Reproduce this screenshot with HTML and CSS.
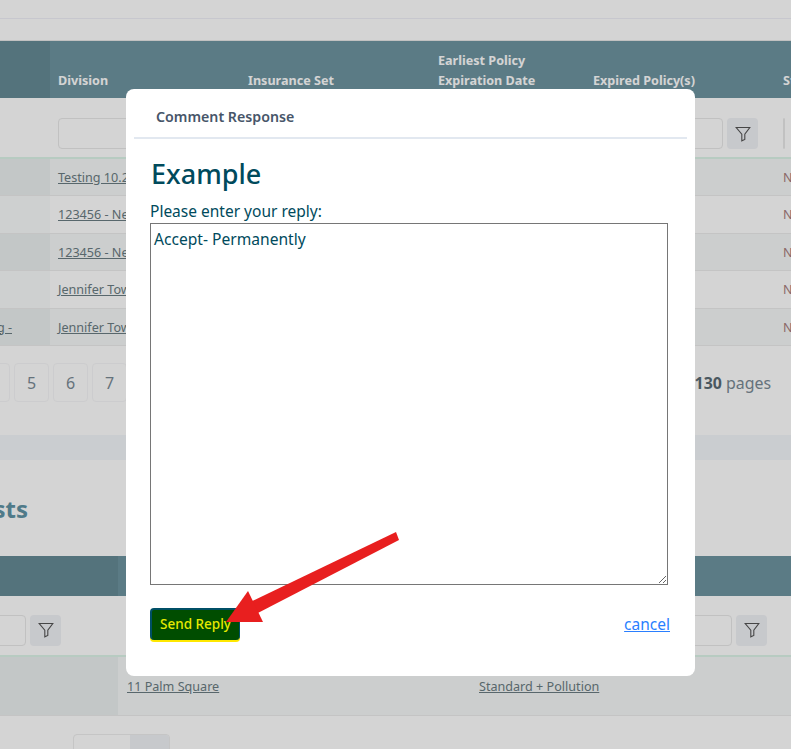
FILE: index.html
```html
<!DOCTYPE html>
<html lang="en">
<head>
<meta charset="utf-8">
<title>Comment Response</title>
<link rel="stylesheet" href="styles.css">
</head>
<body>
<div class="page">
  <div class="topbar"></div>
  <div class="subbar"></div>

  <section class="grid grid-one">
    <div class="row head">
      <div class="cell fixed"></div>
      <div class="cell">Division</div>
      <div class="cell">Insurance Set</div>
      <div class="cell">Earliest Policy<br>Expiration Date</div>
      <div class="cell">Expired Policy(s)</div>
      <div class="cell">Status</div>
    </div>
    <div class="row filters">
      <div class="cell"></div>
      <div class="cell"><span class="input"></span></div>
      <div class="cell"><span class="input"></span></div>
      <div class="cell"><span class="input"></span></div>
      <div class="cell filter-end">
        <span class="input"></span>
        <button class="funnel" type="button" aria-label="Filter"><svg viewBox="0 0 16 16" class="funnel-icon"><path d="M1.2 1.5h13.6L9.8 8.2v5.2l-3 1.4V8.2z"/></svg></button>
      </div>
      <div class="cell"><span class="input"></span></div>
    </div>
    <div class="row body alt">
      <div class="cell fixed"></div>
      <div class="cell"><a href="#">Testing 10.2</a></div>
      <div class="cell"></div><div class="cell"></div><div class="cell"></div>
      <div class="cell status">No</div>
    </div>
    <div class="row body">
      <div class="cell fixed"></div>
      <div class="cell"><a href="#">123456 - New</a></div>
      <div class="cell"></div><div class="cell"></div><div class="cell"></div>
      <div class="cell status">No</div>
    </div>
    <div class="row body alt">
      <div class="cell fixed"></div>
      <div class="cell"><a href="#">123456 - New</a></div>
      <div class="cell"></div><div class="cell"></div><div class="cell"></div>
      <div class="cell status">No</div>
    </div>
    <div class="row body">
      <div class="cell fixed"></div>
      <div class="cell"><a href="#">Jennifer Towers</a></div>
      <div class="cell"></div><div class="cell"></div><div class="cell"></div>
      <div class="cell status">No</div>
    </div>
    <div class="row body alt">
      <div class="cell fixed clipped"><a href="#">Testing -</a></div>
      <div class="cell"><a href="#">Jennifer Towers</a></div>
      <div class="cell"></div><div class="cell"></div><div class="cell"></div>
      <div class="cell status">No</div>
    </div>
  </section>

  <div class="pager">
    <div class="pages">
      <span class="page-box">4</span>
      <span class="page-box">5</span>
      <span class="page-box">6</span>
      <span class="page-box">7</span>
    </div>
    <div class="page-count"><b>130</b> pages</div>
  </div>

  <div class="band"></div>

  <div class="section-title"><h2>Requests</h2></div>

  <section class="grid grid-two">
    <div class="row head two">
      <div class="cell fixed"></div>
      <div class="cell"></div>
      <div class="cell"></div>
    </div>
    <div class="row filters two">
      <div class="cell filter-start">
        <span class="input"></span>
        <button class="funnel" type="button" aria-label="Filter"><svg viewBox="0 0 16 16" class="funnel-icon"><path d="M1.2 1.5h13.6L9.8 8.2v5.2l-3 1.4V8.2z"/></svg></button>
      </div>
      <div class="cell"></div>
      <div class="cell filter-last">
        <span class="input"></span>
        <button class="funnel" type="button" aria-label="Filter"><svg viewBox="0 0 16 16" class="funnel-icon"><path d="M1.2 1.5h13.6L9.8 8.2v5.2l-3 1.4V8.2z"/></svg></button>
      </div>
    </div>
    <div class="row body alt two">
      <div class="cell fixed"></div>
      <div class="cell"><a href="#">11 Palm Square</a></div>
      <div class="cell"><a href="#">Standard + Pollution</a></div>
    </div>
  </section>

  <div class="footer">
    <span class="per-page">items in</span>
    <span class="select"><span class="select-value">5</span><span class="select-arrow"></span></span>
    <span class="item-count">1 items in 1</span>
  </div>

  <div class="overlay">
    <div class="modal">
      <div class="modal-head">Comment Response</div>
      <div class="modal-body">
        <h1>Example</h1>
        <label class="reply-label" for="reply">Please enter your reply:</label>
        <textarea id="reply" class="reply">Accept- Permanently</textarea>
        <div class="actions">
          <button class="send" type="button">Send Reply</button>
          <a class="cancel" href="#">cancel</a>
        </div>
      </div>
    </div>
    <svg class="arrow" viewBox="0 0 791 749" aria-hidden="true">
      <polygon points="396,532 399,540 252,616 246,604"/>
      <polygon points="248,591 263,622 226,622"/>
    </svg>
  </div>
</div>
</body>
</html>
```

FILE: styles.css
```css
* { box-sizing: border-box; }
html, body { margin: 0; padding: 0; }
body {
  font-family: "Noto Sans", "Open Sans", sans-serif;
  background: #fff;
}
.page {
  position: relative;
  width: 791px;
  height: 749px;
  overflow: hidden;
  background: #fff;
  color: #4a5a60;
}
.topbar { height: 19px; border-bottom: 1px solid #f0f0f8; }
.subbar { height: 22px; border-bottom: 1px solid #e8e8e8; }

.row { display: grid; }
.grid-one .row { grid-template-columns: 50px 190px 190px 155px 190px 1fr; }
.grid-two .row { grid-template-columns: 118px 352px 1fr; }
.cell {
  padding: 0 8px;
  min-width: 0;
  white-space: nowrap;
  overflow: hidden;
}

.head {
  height: 57px;
  background: #6e95a1;
  color: #fff;
  font-size: 12.6px;
  font-weight: 700;
  line-height: 20px;
}
.head .cell { display: flex; align-items: flex-end; padding-bottom: 7px; }
.head .fixed { background: #668b96; }
.head.two { height: 40px; }

.filters {
  height: 61px;
  border-bottom: 2px solid #dcf4e8;
}
.filters .cell { display: flex; align-items: flex-start; padding-top: 20px; gap: 4px; }
.filters.two .cell { padding-top: 19px; }
.input {
  display: block;
  flex: 1;
  height: 31px;
  border: 1px solid #e8e8e8;
  border-radius: 4px;
  background: #fff;
}
.funnel {
  flex: none;
  width: 31px;
  height: 31px;
  padding: 0;
  border: 0;
  border-radius: 4px;
  background: #f0f2f6;
  display: flex;
  align-items: center;
  justify-content: center;
}
.funnel-icon {
  width: 16px;
  height: 16px;
  fill: none;
  stroke: #555;
  stroke-width: 1.1;
}
.filter-end { padding-right: 17px; }
.filter-start { padding-left: 0; padding-right: 57px; }
.filter-start .input { margin-left: -40px; }
.filter-last { padding-right: 24px; }

.body {
  height: 37.4px;
  border-bottom: 1px solid #ececec;
  font-size: 12.6px;
}
.body .cell { line-height: 37px; }
.body.alt { background: #f6f8f8; }
.body .fixed { background: #f8fafa; }
.body.alt .fixed { background: #ebf0f0; }
.body.two { height: 59px; }
.body.two .cell { padding-left: 9px; line-height: 60px; }
.body a { color: #6a7c82; text-decoration: underline; }
.status { color: #a87d7d; }
.clipped { display: flex; justify-content: flex-end; padding-left: 0; padding-right: 38px; }

.pager {
  height: 89px;
  padding-top: 17px;
  display: flex;
  justify-content: space-between;
}
.pages { width: 127px; display: flex; justify-content: flex-end; gap: 4px; }
.page-box {
  flex: none;
  width: 35px;
  height: 39px;
  border: 1px solid #f6f6f8;
  border-radius: 4px;
  font-size: 16px;
  line-height: 38px;
  text-align: center;
  color: #7a8a95;
}
.page-count {
  margin-right: 20px;
  font-size: 15.9px;
  line-height: 41px;
  color: #7a8a95;
}
.page-count b { color: #5a6a74; }
.band { height: 25px; background: #f3f7fb; }
.section-title {
  height: 96px;
  width: 28px;
  display: flex;
  justify-content: flex-end;
}
.section-title h2 {
  flex: none;
  margin: 31px 0 0;
  font-size: 24px;
  line-height: 36px;
  font-weight: 700;
  color: #5f93a5;
}

.footer {
  height: 40px;
  margin-top: 18px;
  display: flex;
  align-items: flex-start;
  font-size: 16px;
  line-height: 24px;
  color: #6b7b85;
}
.per-page { flex: none; width: 76px; margin-left: -3px; padding-top: 10px; white-space: nowrap; }
.select {
  flex: none;
  display: flex;
  width: 97px;
  height: 36px;
  border: 1px solid #ededed;
  border-radius: 4px;
  overflow: hidden;
}
.select-value { flex: 1; padding: 9px 0 0 9px; }
.select-arrow { width: 39px; background: #f0f2f6; }
.item-count { margin-left: 31px; padding-top: 10px; white-space: nowrap; }

.overlay {
  position: absolute;
  inset: 0;
  background: rgba(0, 0, 0, .17);
  padding: 89px 0 0 126px;
}
.modal {
  width: 569px;
  height: 587px;
  background: #fff;
  border-radius: 8px;
  padding: 0 8px;
}
.modal-head {
  height: 50px;
  padding: 18px 0 0 22px;
  border-bottom: 2px solid #e2e8f0;
  font-size: 14.2px;
  line-height: 20px;
  font-weight: 600;
  color: #475569;
}
.modal-body { padding: 0 17px 0 17px; color: #004a5c; }
h1 {
  margin: 0;
  padding-top: 15px;
  font-size: 27px;
  line-height: 40px;
  font-weight: 500;
  color: #004a5c;
}
.reply-label {
  display: block;
  margin: 7px 0 1px -1px;
  font-size: 15.5px;
  line-height: 21px;
}
.reply {
  display: block;
  width: 518px;
  height: 362px;
  margin: 0 0 0 -1px;
  padding: 4px 3px;
  border: 1px solid #767676;
  background: #fff;
  font-family: inherit;
  font-size: 15.6px;
  line-height: 22px;
  color: #004a5c;
}
.actions {
  margin: 23px 0 0 -1px;
  display: flex;
  justify-content: space-between;
  align-items: center;
  width: 520px;
}
.send {
  width: 90px;
  height: 32px;
  padding: 0 0 2px;
  border: solid #004f66;
  border-width: 2px 1px 0 2px;
  border-radius: 4px;
  background: #004d00;
  box-shadow: 0 2px 0 #ffe800;
  color: #e6ea00;
  font-family: inherit;
  font-size: 13.5px;
  font-weight: 500;
}
.cancel {
  font-size: 15.5px;
  color: #2a7fff;
  text-decoration: underline;
}
.arrow {
  position: absolute;
  left: 0;
  top: 0;
  width: 791px;
  height: 749px;
  fill: #e81f1f;
}
```
